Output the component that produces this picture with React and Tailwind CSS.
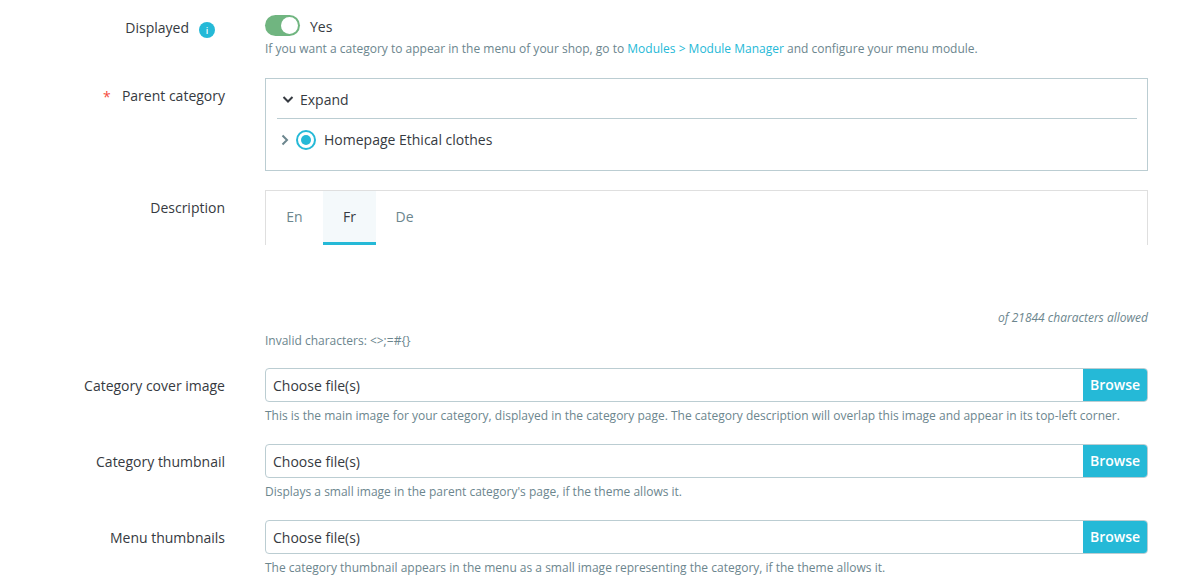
import React from "react";

const FileRow = ({ label, help, className }) => (
  <div className={`flex ${className}`}>
    <div className="w-[225px] shrink-0 pt-[8px] text-right text-[14px] leading-[19px] text-[#363a41]">
      {label}
    </div>
    <div className="ml-[40px] w-[883px]">
      <div className="flex h-[34px] overflow-hidden rounded-[4px] border border-[#bbcdd2]">
        <div className="flex-1 pl-[7px] text-[14px] leading-[33px] text-[#363a41]">
          Choose file(s)
        </div>
        <div className="w-[64px] bg-[#25b9d7] text-center text-[14px] leading-[31px] font-semibold text-white">
          Browse
        </div>
      </div>
      <p className="mt-[5px] text-[12px] leading-[17px] text-[#6c868e]">{help}</p>
    </div>
  </div>
);

export default function App() {
  return (
    <div className="h-[582px] w-[1190px] overflow-hidden bg-white font-['Open_Sans',sans-serif]">
      {/* Displayed */}
      <div className="flex pt-[15px]">
        <div className="flex w-[225px] shrink-0 justify-end pt-[3px] pr-[10px] text-[14px] leading-[19px] text-[#363a41]">
          <span>Displayed</span>
          <span className="mt-[4px] ml-[10px] flex h-[16px] w-[16px] items-center justify-center rounded-full bg-[#25b9d7] text-[9px] leading-none font-semibold text-white">
            i
          </span>
        </div>
        <div className="ml-[40px] w-[883px]">
          <div className="flex h-[21px] items-center">
            <div className="flex h-[21px] w-[35px] items-center justify-end rounded-full bg-[#70b580] pr-[2px]">
              <div className="h-[17px] w-[17px] rounded-full bg-white" />
            </div>
            <span className="mt-[2px] ml-[10px] text-[14px] leading-[21px] text-[#363a41]">Yes</span>
          </div>
          <p className="mt-[4px] text-[12px] leading-[17px] text-[#6c868e]">
            If you want a category to appear in the menu of your shop, go to{" "}
            <a className="text-[#25b9d7]">{"Modules > Module Manager"}</a> and configure your menu
            module.
          </p>
        </div>
      </div>

      {/* Parent category */}
      <div className="mt-[21px] flex">
        <div className="relative w-[225px] shrink-0 pt-[8px] text-right text-[14px] leading-[19px] text-[#363a41]">
          <span className="absolute top-[9px] left-[103px] text-[14px] text-[#f54c3e]">*</span>
          Parent category
        </div>
        <div className="ml-[40px] h-[93px] w-[883px] border border-[#bbcdd2] pr-[10px] pl-[11px]">
          <div className="flex h-[40px] items-center border-b border-[#bbcdd2] pt-[1px] pl-[5px] text-[14px] text-[#363a41]">
            <svg width="12" height="12" viewBox="0 0 12 12" fill="none" stroke="#363a41" strokeWidth="2">
              <path d="M1.5 4l4.5 4.5L10.5 4" />
            </svg>
            <span className="ml-[6px]">Expand</span>
          </div>
          <div className="mt-[11px] flex items-center pl-[4px] text-[14px] text-[#363a41]">
            <svg width="8" height="12" viewBox="0 0 8 12" fill="none" stroke="#6c868e" strokeWidth="2">
              <path d="M1.5 1.5L6 6l-4.5 4.5" />
            </svg>
            <div className="ml-[7px] flex h-[20px] w-[20px] items-center justify-center rounded-full border-2 border-[#25b9d7]">
              <div className="h-[10px] w-[10px] rounded-full bg-[#25b9d7]" />
            </div>
            <span className="ml-[8px] leading-[20px]">Homepage Ethical clothes</span>
          </div>
        </div>
      </div>

      {/* Description */}
      <div className="mt-[19px] flex">
        <div className="w-[225px] shrink-0 pt-[8px] text-right text-[14px] leading-[19px] text-[#363a41]">
          Description
        </div>
        <div className="ml-[40px] w-[883px]">
          <div className="flex h-[55px] border-x border-t border-[#dfdfdf] text-[14px]">
            <div className="w-[57px] pt-[16px] text-center leading-[19px] text-[#6c868e]">En</div>
            <div className="w-[53px] border-b-[3px] border-[#25b9d7] bg-[#f4f9fb] pt-[16px] text-center leading-[19px] text-[#363a41]">
              Fr
            </div>
            <div className="w-[57px] pt-[16px] text-center leading-[19px] text-[#6c868e]">De</div>
          </div>
          <p className="mt-[64px] text-right text-[12px] leading-[17px] text-[#6c868e] italic">
            of 21844 characters allowed
          </p>
          <p className="mt-[6px] text-[12px] leading-[17px] text-[#6c868e]">
            {"Invalid characters: <>;=#{}"}
          </p>
        </div>
      </div>

      <FileRow
        className="mt-[19px]"
        label="Category cover image"
        help="This is the main image for your category, displayed in the category page. The category description will overlap this image and appear in its top-left corner."
      />
      <FileRow
        className="mt-[20px]"
        label="Category thumbnail"
        help="Displays a small image in the parent category's page, if the theme allows it."
      />
      <FileRow
        className="mt-[20px]"
        label="Menu thumbnails"
        help="The category thumbnail appears in the menu as a small image representing the category, if the theme allows it."
      />
    </div>
  );
}
